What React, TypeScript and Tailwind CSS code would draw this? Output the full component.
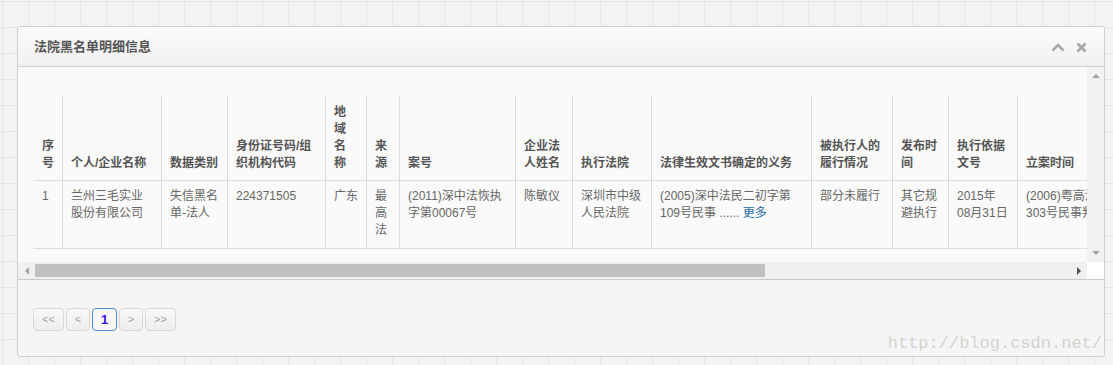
import React from "react";

const headers: string[][] = [
  ["序", "号"],
  ["个人/企业名称"],
  ["数据类别"],
  ["身份证号码/组", "织机构代码"],
  ["地", "域", "名", "称"],
  ["来", "源"],
  ["案号"],
  ["企业法", "人姓名"],
  ["执行法院"],
  ["法律生效文书确定的义务"],
  ["被执行人的", "履行情况"],
  ["发布时", "间"],
  ["执行依据", "文号"],
  ["立案时间"],
  ["执行标的"],
  ["性别"],
];

const row: string[][] = [
  ["1"],
  ["兰州三毛实业", "股份有限公司"],
  ["失信黑名", "单-法人"],
  ["224371505"],
  ["广东"],
  ["最", "高", "法"],
  ["(2011)深中法恢执", "字第00067号"],
  ["陈敏仪"],
  ["深圳市中级", "人民法院"],
  ["(2005)深中法民二初字第", "109号民事 ......"],
  ["部分未履行"],
  ["其它规", "避执行"],
  ["2015年", "08月31日"],
  ["(2006)粤高法民二终字第", "303号民事判决书"],
  ["-"],
  ["-"],
];

const font = "font-['Liberation_Sans','Noto_Sans_CJK_SC',sans-serif]";

const ChevronUp = () => (
  <svg width="14" height="9" viewBox="0 0 14 9">
    <path d="M1.5 7.5 L7 2 L12.5 7.5" fill="none" stroke="#a9a9a9" strokeWidth="2.6" />
  </svg>
);

const CloseX = () => (
  <svg width="11" height="11" viewBox="0 0 11 11">
    <path d="M1.5 1.5 L9.5 9.5 M9.5 1.5 L1.5 9.5" fill="none" stroke="#a9a9a9" strokeWidth="2.8" />
  </svg>
);

const PageBtn = ({ label, w, active }: { label: string; w: string; active?: boolean }) => (
  <div
    className={`${w} h-[23px] rounded-[4px] border flex items-center justify-center text-[11px] ${
      active
        ? "border-[#4a8fd8] bg-[#f7f7f7] text-[#3a10f0] font-bold text-[13px]"
        : "border-[#d8d8d8] bg-[linear-gradient(#f8f8f8,#ededed)] text-[#a0a0a0]"
    }`}
  >
    {label}
  </div>
);

export default function App() {
  return (
    <div
      className={`w-[1113px] h-[365px] overflow-hidden pt-[26px] pl-[17px] bg-[#f3f3f3] bg-[linear-gradient(90deg,#e6e6e6_1px,transparent_1px),linear-gradient(#e6e6e6_1px,transparent_1px)] bg-[length:26px_26px] bg-[position:2px_1px] ${font}`}
    >
      <div className="relative w-[1088px] h-[331px] border border-[#cfcfcf] rounded-[3px] bg-[#f5f5f5] overflow-hidden">
        <div className="h-[40px] border-b border-[#d2d2d2] bg-[linear-gradient(#fbfbfb,#f1f1f1)] flex items-center pl-[16px] pr-[17px]">
          <span className="text-[13px] font-bold text-[#555]">法院黑名单明细信息</span>
          <div className="ml-auto flex items-center gap-[11px] pt-[1px]">
            <ChevronUp />
            <CloseX />
          </div>
        </div>

        <div className="flex">
          <div className="w-[1069px] h-[195px] overflow-hidden bg-[#fafafa] pt-[29px] pl-[15px]">
            <div className="w-max text-[12px] leading-[17px]">
              <div className="grid grid-cols-[29px_99px_66px_98px_41px_33px_116px_57px_79px_160px_81px_56px_69px_150px_90px_60px]">
                {headers.map((lines, i) => (
                  <div
                    key={i}
                    className={`border-l ${i === 0 ? "border-l-transparent" : "border-l-[#dcdcdc]"} border-b border-b-[#dcdcdc] px-2 py-2 flex flex-col justify-end font-bold text-[#555] whitespace-nowrap`}
                  >
                    {lines.map((l, j) => (
                      <span key={j}>{l}</span>
                    ))}
                  </div>
                ))}
                {row.map((lines, i) => (
                  <div
                    key={i}
                    className={`border-l ${i === 0 ? "border-l-transparent" : "border-l-[#dcdcdc]"} border-b border-b-[#dcdcdc] px-2 pt-[7px] pb-[9px] flex flex-col text-[#666] whitespace-nowrap`}
                  >
                    {lines.map((l, j) => (
                      <span key={j}>
                        {l}
                        {i === 9 && j === 1 && <span className="text-[#1f6aa6]"> 更多</span>}
                      </span>
                    ))}
                  </div>
                ))}
              </div>
            </div>
          </div>
          <div className="w-[17px] h-[195px] bg-[#f1f1f1] flex flex-col items-center justify-between py-[7px]">
            <div className="w-0 h-0 border-x-[4px] border-x-transparent border-b-[4px] border-b-[#a3a3a3]" />
            <div className="w-0 h-0 border-x-[4px] border-x-transparent border-t-[4px] border-t-[#a3a3a3]" />
          </div>
        </div>

        <div className="flex h-[17px] border-b border-[#c9c9c9] box-content">
          <div className="w-[1069px] bg-[#f0f0f0] flex items-center">
            <div className="w-[17px] flex justify-center">
              <div className="w-0 h-0 border-y-[4px] border-y-transparent border-r-[4px] border-r-[#a3a3a3]" />
            </div>
            <div className="w-[730px] h-[13px] bg-[#c1c1c1]" />
            <div className="ml-auto w-[17px] flex justify-center">
              <div className="w-0 h-0 border-y-[4px] border-y-transparent border-l-[4px] border-l-[#505050]" />
            </div>
          </div>
          <div className="w-[17px] bg-white" />
        </div>

        <div className="pt-[28px] pl-[15px] flex gap-[2px] font-['Liberation_Sans',sans-serif]">
          <PageBtn label="<<" w="w-[31px]" />
          <PageBtn label="<" w="w-[24px]" />
          <PageBtn label="1" w="w-[25px]" active />
          <PageBtn label=">" w="w-[24px]" />
          <PageBtn label=">>" w="w-[31px]" />
        </div>

        <div className="absolute right-[2px] bottom-[2px] text-[17px] leading-[20px] text-[#d6d2ce] font-['Liberation_Mono',monospace]">
          http://blog.csdn.net/
        </div>
      </div>
    </div>
  );
}
